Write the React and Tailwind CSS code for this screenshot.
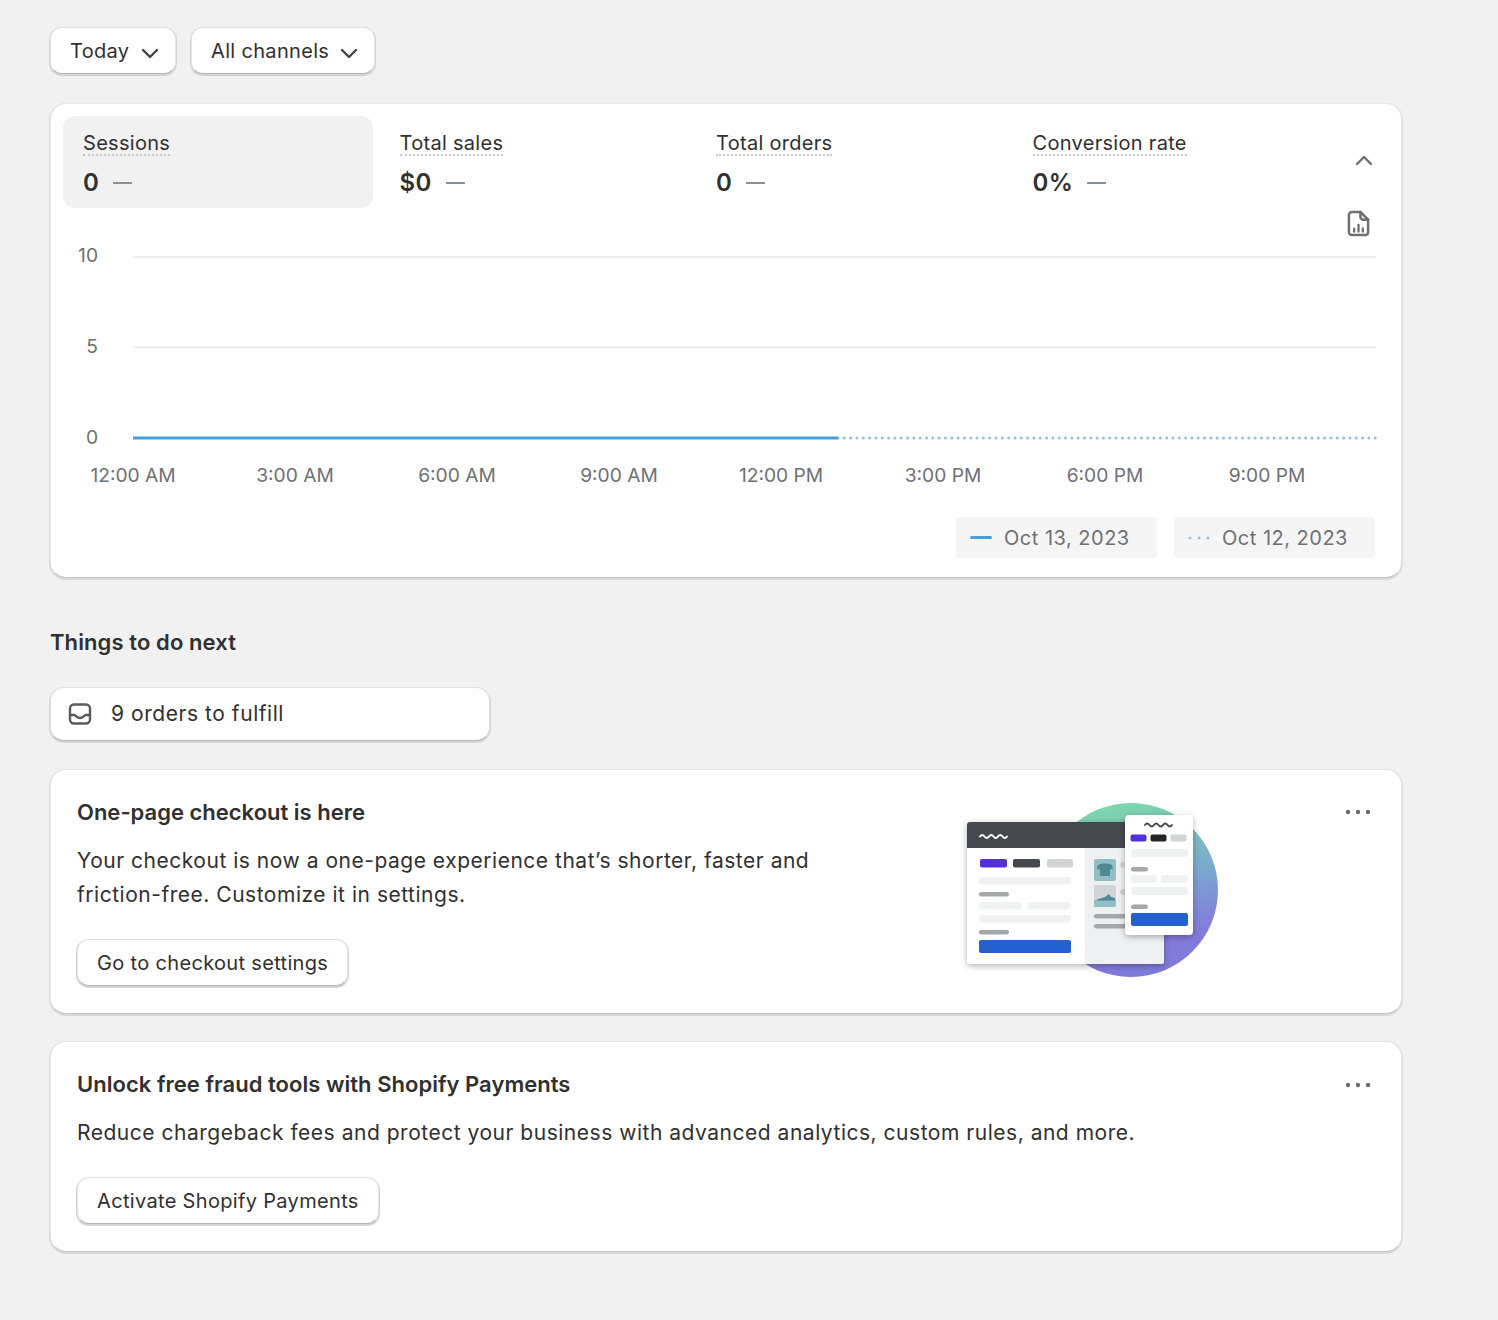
import React from "react";

const cardClass =
  "relative rounded-[16px] bg-white border border-[#e6e6e6] border-b-[#c4c4c4] shadow-[0_1px_0_1px_#d9d9d9]";
const buttonClass =
  "flex items-center rounded-[12px] bg-white border border-[#e3e3e3] border-b-[#b5b5b5] shadow-[0_1px_0_1px_#d4d4d4] text-[#303030] text-[20px] tracking-[0.33px]";

const Chevron = ({ up }) => (
  <svg width="20" height="20" viewBox="0 0 20 20" fill="none" stroke={up ? "#707070" : "#444444"} strokeWidth="2.4" strokeLinecap="round" strokeLinejoin="round">
    <path d={up ? "M3 13l7-7 7 7" : "M3 7l7 7 7-7"} />
  </svg>
);

const Dots = () => (
  <svg width="26" height="6" viewBox="0 0 26 6" fill="#6b6b6b">
    <circle cx="3" cy="3" r="2.2" />
    <circle cx="13" cy="3" r="2.2" />
    <circle cx="23" cy="3" r="2.2" />
  </svg>
);

const Stat = ({ label, value, active }) => (
  <div className={`h-[92px] w-[310px] rounded-[12px] pl-[20px] pt-[17px] ${active ? "bg-[#f1f1f1]" : ""}`}>
    <div className="w-fit border-b-2 border-dotted border-[#c9c9c9] text-[20px] leading-[21px] tracking-[0.3px] text-[#303030]">
      {label}
    </div>
    <div className="mt-[10px] flex items-center gap-[14px]">
      <span className="text-[24px] font-semibold leading-[34px] tracking-[0.3px] text-[#303030]">{value}</span>
      <span className="h-[2px] w-[19px] bg-[#8c9196]" />
    </div>
  </div>
);

const Chart = () => {
  const times = ["12:00 AM", "3:00 AM", "6:00 AM", "9:00 AM", "12:00 PM", "3:00 PM", "6:00 PM", "9:00 PM"];
  return (
    <svg className="block" width="1350" height="270" viewBox="0 0 1350 270" fontFamily="Inter, sans-serif" fontSize="19.2" fill="#6f7074">
      <line x1="82" x2="1325" y1="24" y2="24" stroke="#eeeeee" strokeWidth="2" />
      <line x1="82" x2="1325" y1="114.5" y2="114.5" stroke="#eeeeee" strokeWidth="2" />
      <text x="47" y="29" textAnchor="end">10</text>
      <text x="47" y="120" textAnchor="end">5</text>
      <text x="47" y="211" textAnchor="end">0</text>
      <line x1="787" x2="1324.5" y1="205" y2="205" stroke="#8cc2e6" strokeWidth="3" strokeLinecap="round" strokeDasharray="0 6.32" />
      <line x1="82" x2="787" y1="205" y2="205" stroke="#4a9ed9" strokeWidth="3" />
      {times.map((t, i) => (
        <text key={t} x={82 + i * 162} y="249" textAnchor="middle">{t}</text>
      ))}
    </svg>
  );
};

const Illustration = () => (
  <svg width="300" height="200" viewBox="0 0 300 200" className="shrink-0 blur-[0.4px]">
    <defs>
      <linearGradient id="disc" x1="0.45" y1="0" x2="0.65" y2="1">
        <stop offset="0" stopColor="#7ed6ad" />
        <stop offset="0.45" stopColor="#7aa9cf" />
        <stop offset="0.8" stopColor="#8479dc" />
        <stop offset="1" stopColor="#7d7bd8" />
      </linearGradient>
      <filter id="soft" x="-10%" y="-10%" width="120%" height="125%">
        <feDropShadow dx="0" dy="2" stdDeviation="3" floodColor="#000" floodOpacity="0.3" />
      </filter>
    </defs>
    <circle cx="191" cy="100" r="87" fill="url(#disc)" />
    <g filter="url(#soft)">
      <path d="M30 32h194v139a3 3 0 0 1-3 3H30a3 3 0 0 1-3-3V35a3 3 0 0 1 3-3z" fill="#fff" />
    </g>
    <path d="M145 58h79v113a3 3 0 0 1-3 3h-76z" fill="#eef0f1" />
    <path d="M30 32h194v26H27V35a3 3 0 0 1 3-3z" fill="#45484c" />
    <path d="M40 46.500q2.200-3 4.500 0t4.500 0 4.500 0 4.500 0 4.500 0 4.500 0" fill="none" stroke="#fff" strokeWidth="1.900" strokeLinecap="round" />
    <rect x="40" y="69" width="27" height="8.500" rx="2" fill="#5230e0" />
    <rect x="73" y="69" width="27" height="8.500" rx="2" fill="#45484c" />
    <rect x="107" y="69" width="26" height="8.500" rx="2" fill="#d2d4d6" />
    <rect x="39" y="87" width="92" height="7.500" rx="3" fill="#f0f1f2" />
    <rect x="39" y="102" width="30" height="4.500" rx="2.200" fill="#a4a8ab" />
    <rect x="39" y="112" width="43" height="7.500" rx="3" fill="#f0f1f2" />
    <rect x="88" y="112" width="43" height="7.500" rx="3" fill="#f0f1f2" />
    <rect x="39" y="125" width="92" height="7.500" rx="3" fill="#f0f1f2" />
    <rect x="39" y="140" width="30" height="4.500" rx="2.200" fill="#a4a8ab" />
    <rect x="39" y="150" width="92" height="13" rx="2" fill="#2560cf" />
    <rect x="154" y="69" width="22" height="22" rx="2" fill="#93bec3" />
    <path d="M158 75l4-1.500h6l4 1.500 1 4-3 .5v6.500h-10v-6.500l-3-.5z" fill="#4f8a92" />
    <rect x="154" y="95" width="22" height="22" rx="2" fill="#d2d5d7" />
    <path d="M154 117v-7h22v5a2 2 0 0 1-2 2z" fill="#93bec3" />
    <path d="M157 110.500v-1l8-2.500 4-3 2 3 4 1v2.500z" fill="#4f8a92" />
    <circle cx="183" cy="75" r="3" fill="#d2d4d6" />
    <circle cx="183" cy="102" r="3" fill="#d2d4d6" />
    <rect x="154" y="124" width="40" height="4.500" rx="2.200" fill="#a4a8ab" />
    <rect x="154" y="134" width="40" height="4.500" rx="2.200" fill="#a4a8ab" />
    <g filter="url(#soft)">
      <rect x="185" y="25" width="68" height="120" rx="4" fill="#fff" />
    </g>
    <path d="M205 35q2.200-3 4.500 0t4.500 0 4.500 0 4.500 0 4.500 0 4.500 0" fill="none" stroke="#45484c" strokeWidth="1.900" strokeLinecap="round" />
    <rect x="190.500" y="44.500" width="16" height="7" rx="2" fill="#5230e0" />
    <rect x="210.500" y="44.500" width="16" height="7" rx="2" fill="#232527" />
    <rect x="230.500" y="44.500" width="16" height="7" rx="2" fill="#d2d4d6" />
    <rect x="191" y="59" width="57" height="8" rx="3" fill="#f0f1f2" />
    <rect x="191" y="77" width="17" height="4.500" rx="2.200" fill="#a4a8ab" />
    <rect x="191" y="85" width="26" height="8" rx="3" fill="#f0f1f2" />
    <rect x="221" y="85" width="27" height="8" rx="3" fill="#f0f1f2" />
    <rect x="191" y="97" width="57" height="8" rx="3" fill="#f0f1f2" />
    <rect x="191" y="114.500" width="17" height="4.500" rx="2.200" fill="#a4a8ab" />
    <rect x="191" y="123" width="57" height="13" rx="2" fill="#2560cf" />
  </svg>
);

const App = () => {
  return (
    <div className="min-h-[1320px] bg-[#f1f1f1] pl-[50px] pt-[27px] font-['Inter',sans-serif]">
      <div className="w-[1352px]">
        {/* filters */}
        <div className="flex gap-[15px]">
          <button className={`${buttonClass} h-[47px] w-[126px] pl-[19px]`}>
            Today
            <span className="ml-[11px] mt-[4px]"><Chevron /></span>
          </button>
          <button className={`${buttonClass} h-[47px] w-[184px] pl-[19px]`}>
            All channels
            <span className="ml-[10px] mt-[4px]"><Chevron /></span>
          </button>
        </div>

        {/* stats card */}
        <div className={`${cardClass} mt-[29px] h-[475px]`}>
          <div className="flex gap-[6.500px] pl-[12px] pt-[12px]">
            <Stat label="Sessions" value="0" active />
            <Stat label="Total sales" value="$0" />
            <Stat label="Total orders" value="0" />
            <Stat label="Conversion rate" value="0%" />
            <div className="ml-[25px] pt-[35px]"><Chevron up /></div>
          </div>
          <div className="absolute right-[31px] top-[106px]">
            <svg width="23" height="27" viewBox="0 0 24 28" fill="none" stroke="#707070" strokeWidth="2.600" strokeLinejoin="round" strokeLinecap="round">
              <path d="M5 2h9l8 8v13a3 3 0 0 1-3 3H5a3 3 0 0 1-3-3V5a3 3 0 0 1 3-3z" />
              <path d="M14 2v5a3 3 0 0 0 3 3h5" />
              <path d="M7.500 22.500v-3M12 22.500v-7M16.500 22.500v-3.500" strokeWidth="2.400" />
            </svg>
          </div>
          <div className="mt-[25px]">
            <Chart />
          </div>
          <div className="mr-[26px] mt-[14px] flex justify-end gap-[17px]">
            <div className="flex h-[41px] w-[201px] items-center gap-[12px] rounded-[4px] bg-[#f5f5f6] pl-[14px] text-[20px] tracking-[0.5px] text-[#6f7074]">
              <span className="h-[3px] w-[22px] rounded-full bg-[#4a9ed9]" />
              Oct 13, 2023
            </div>
            <div className="flex h-[41px] w-[201px] items-center gap-[12px] rounded-[4px] bg-[#f5f5f6] pl-[14px] text-[20px] tracking-[0.5px] text-[#6f7074]">
              <svg width="22" height="4" viewBox="0 0 22 4" fill="#8cc2e6">
                <circle cx="2" cy="2" r="1.500" />
                <circle cx="11" cy="2" r="1.500" />
                <circle cx="20" cy="2" r="1.500" />
              </svg>
              Oct 12, 2023
            </div>
          </div>
        </div>

        <h2 className="mt-[48px] text-[22px] font-semibold leading-[32px] tracking-[0.1px] text-[#303030]">Things to do next</h2>

        <div className={`${buttonClass} mt-[29px] h-[54px] w-[440px] rounded-[14px] pl-[17px] text-[21px] tracking-[0.55px]`}>
          <svg width="24" height="24" viewBox="0 0 24 24" fill="none" stroke="#5c5c5c" strokeWidth="2.400" strokeLinejoin="round" strokeLinecap="round">
            <rect x="2" y="2.500" width="20" height="19" rx="4" />
            <path d="M2 13h4.500c1 0 1.500 3 5.500 3s4.500-3 5.500-3H22" />
          </svg>
          <span className="ml-[19px]">9 orders to fulfill</span>
        </div>

        {/* checkout card */}
        <div className={`${cardClass} mt-[28px] flex h-[245px] items-start`}>
          <div className="pl-[26px] pt-[27px]">
            <h3 className="text-[22px] font-semibold leading-[30px] text-[#303030]">One-page checkout is here</h3>
            <p className="mt-[17px] w-[760px] text-[21px] leading-[34px] tracking-[0.52px] text-[#303030]">
              Your checkout is now a one-page experience that’s shorter, faster and friction-free. Customize it in settings.
            </p>
            <button className={`${buttonClass} mt-[27px] h-[47px] px-[19px]`}>Go to checkout settings</button>
          </div>
          <div className="ml-auto mr-[161px] mt-[20px]">
            <Illustration />
          </div>
          <div className="absolute right-[30px] top-[39px]"><Dots /></div>
        </div>

        {/* payments card */}
        <div className={`${cardClass} mt-[27px] h-[211px] pl-[26px] pt-[27px]`}>
          <h3 className="text-[22px] font-semibold leading-[30px] tracking-[0.03px] text-[#303030]">Unlock free fraud tools with Shopify Payments</h3>
          <p className="mt-[17px] text-[21px] leading-[34px] tracking-[0.52px] text-[#303030]">
            Reduce chargeback fees and protect your business with advanced analytics, custom rules, and more.
          </p>
          <button className={`${buttonClass} mt-[27px] h-[47px] px-[19px]`}>Activate Shopify Payments</button>
          <div className="absolute right-[30px] top-[40px]"><Dots /></div>
        </div>
      </div>
    </div>
  );
};

export default App;
